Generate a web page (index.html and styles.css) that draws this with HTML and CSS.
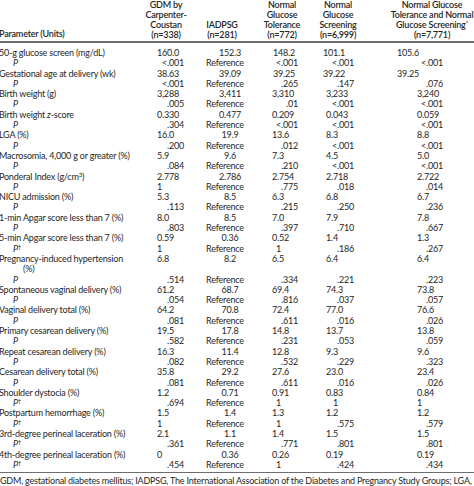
FILE: index.html
```html
<!DOCTYPE html>
<html>
<head>
<meta charset="utf-8">
<link rel="stylesheet" href="styles.css">
</head>
<body>
<div class="sheet">
<table class="tbl">
<colgroup>
<col class="c0"><col class="c1"><col class="c2"><col class="c3"><col class="c4"><col class="c5">
</colgroup>
<thead>
<tr>
<th class="h0">Parameter (Units)</th>
<th>GDM by<br>Carpenter-<br>Coustan<br>(n=338)</th>
<th>IADPSG<br>(n=281)</th>
<th>Normal<br>Glucose<br>Tolerance<br>(n=772)</th>
<th>Normal<br>Glucose<br>Screening<br>(n=6,999)</th>
<th>Normal Glucose<br>Tolerance and Normal<br>Glucose Screening<sup>*</sup><br>(n=7,771)</th>
</tr>
</thead>
<tbody>
<tr class="v first early"><td>50-g glucose screen (mg/dL)</td><td>160.0</td><td>152.3</td><td>148.2</td><td>101.1</td><td>105.6</td></tr>
<tr class="p"><td><i>P</i></td><td>&lt;.001</td><td>Reference</td><td>&lt;.001</td><td>&lt;.001</td><td>&lt;.001</td></tr>
<tr class="v early"><td>Gestational age at delivery (wk)</td><td>38.63</td><td>39.09</td><td>39.25</td><td>39.22</td><td>39.25</td></tr>
<tr class="p"><td><i>P</i></td><td>&lt;.001</td><td>Reference</td><td>.265</td><td>.147</td><td>.076</td></tr>
<tr class="v"><td>Birth weight (g)</td><td>3,288</td><td>3,411</td><td>3,310</td><td>3,233</td><td>3,240</td></tr>
<tr class="p"><td><i>P</i></td><td>.005</td><td>Reference</td><td>.01</td><td>&lt;.001</td><td>&lt;.001</td></tr>
<tr class="v"><td>Birth weight <i>z</i>-score</td><td>0.330</td><td>0.477</td><td>0.209</td><td>0.043</td><td>0.059</td></tr>
<tr class="p"><td><i>P</i></td><td>.304</td><td>Reference</td><td>&lt;.001</td><td>&lt;.001</td><td>&lt;.001</td></tr>
<tr class="v"><td>LGA (%)</td><td>16.0</td><td>19.9</td><td>13.6</td><td>8.3</td><td>8.8</td></tr>
<tr class="p"><td><i>P</i></td><td>.200</td><td>Reference</td><td>.012</td><td>&lt;.001</td><td>&lt;.001</td></tr>
<tr class="v"><td>Macrosomia, 4,000 g or greater (%)</td><td>5.9</td><td>9.6</td><td>7.3</td><td>4.5</td><td>5.0</td></tr>
<tr class="p"><td><i>P</i></td><td>.084</td><td>Reference</td><td>.210</td><td>&lt;.001</td><td>&lt;.001</td></tr>
<tr class="v"><td>Ponderal Index (g/cm<sup>3</sup>)</td><td>2.778</td><td>2.786</td><td>2.754</td><td>2.718</td><td>2.722</td></tr>
<tr class="p"><td><i>P</i></td><td class="one">1</td><td>Reference</td><td>.775</td><td>.018</td><td>.014</td></tr>
<tr class="v"><td>NICU admission (%)</td><td>5.3</td><td>8.5</td><td>6.3</td><td>6.8</td><td>6.7</td></tr>
<tr class="p"><td><i>P</i></td><td>.113</td><td>Reference</td><td>.215</td><td>.250</td><td>.236</td></tr>
<tr class="v"><td>1-min Apgar score less than 7 (%)</td><td>8.0</td><td>8.5</td><td>7.0</td><td>7.9</td><td>7.8</td></tr>
<tr class="p"><td><i>P</i></td><td>.803</td><td>Reference</td><td>.397</td><td>.710</td><td>.667</td></tr>
<tr class="v"><td>5-min Apgar score less than 7 (%)</td><td>0.59</td><td>0.36</td><td>0.52</td><td>1.4</td><td>1.3</td></tr>
<tr class="p"><td><i>P</i><sup>†</sup></td><td class="one">1</td><td>Reference</td><td class="one">1</td><td>.186</td><td>.267</td></tr>
<tr class="v"><td>Pregnancy-induced hypertension</td><td>6.8</td><td>8.2</td><td>6.5</td><td>6.4</td><td>6.4</td></tr>
<tr class="cont"><td>(%)</td><td></td><td></td><td></td><td></td><td></td></tr>
<tr class="p"><td><i>P</i></td><td>.514</td><td>Reference</td><td>.334</td><td>.221</td><td>.223</td></tr>
<tr class="v"><td>Spontaneous vaginal delivery (%)</td><td>61.2</td><td>68.7</td><td>69.4</td><td>74.3</td><td>73.8</td></tr>
<tr class="p"><td><i>P</i></td><td>.054</td><td>Reference</td><td>.816</td><td>.037</td><td>.057</td></tr>
<tr class="v"><td>Vaginal delivery total (%)</td><td>64.2</td><td>70.8</td><td>72.4</td><td>77.0</td><td>76.6</td></tr>
<tr class="p"><td><i>P</i></td><td>.081</td><td>Reference</td><td>.611</td><td>.016</td><td>.026</td></tr>
<tr class="v"><td>Primary cesarean delivery (%)</td><td>19.5</td><td>17.8</td><td>14.8</td><td>13.7</td><td>13.8</td></tr>
<tr class="p"><td><i>P</i></td><td>.582</td><td>Reference</td><td>.231</td><td>.053</td><td>.059</td></tr>
<tr class="v"><td>Repeat cesarean delivery (%)</td><td>16.3</td><td>11.4</td><td>12.8</td><td>9.3</td><td>9.6</td></tr>
<tr class="p"><td><i>P</i></td><td>.082</td><td>Reference</td><td>.532</td><td>.229</td><td>.323</td></tr>
<tr class="v"><td>Cesarean delivery total (%)</td><td>35.8</td><td>29.2</td><td>27.6</td><td>23.0</td><td>23.4</td></tr>
<tr class="p"><td><i>P</i></td><td>.081</td><td>Reference</td><td>.611</td><td>.016</td><td>.026</td></tr>
<tr class="v"><td>Shoulder dystocia (%)</td><td>1.2</td><td>0.71</td><td>0.91</td><td>0.83</td><td>0.84</td></tr>
<tr class="p"><td><i>P</i><sup>†</sup></td><td>.694</td><td>Reference</td><td class="one">1</td><td class="one">1</td><td class="one">1</td></tr>
<tr class="v"><td>Postpartum hemorrhage (%)</td><td>1.5</td><td>1.4</td><td>1.3</td><td>1.2</td><td>1.2</td></tr>
<tr class="p"><td><i>P</i><sup>†</sup></td><td class="one">1</td><td>Reference</td><td class="one">1</td><td>.575</td><td>.579</td></tr>
<tr class="v"><td>3rd-degree perineal laceration (%)</td><td>2.1</td><td>1.1</td><td>1.4</td><td>1.5</td><td>1.5</td></tr>
<tr class="p"><td><i>P</i><sup>†</sup></td><td>.361</td><td>Reference</td><td>.771</td><td>.801</td><td>.801</td></tr>
<tr class="v"><td>4th-degree perineal laceration (%)</td><td>0</td><td>0.36</td><td>0.26</td><td>0.19</td><td>0.19</td></tr>
<tr class="p last"><td><i>P</i><sup>†</sup></td><td>.454</td><td>Reference</td><td class="one">1</td><td>.424</td><td>.434</td></tr>
</tbody>
</table>
<p class="foot">GDM, gestational diabetes mellitus; IADPSG, The International Association of the Diabetes and Pregnancy Study Groups; LGA, large for gestational age; NICU, neonatal intensive care unit.</p>
</div>
</body>
</html>
```

FILE: styles.css
```css
html, body {
  margin: 0;
  padding: 0;
  background: #fff;
}
body {
  width: 474px;
  height: 486px;
  overflow: hidden;
  font-family: Lato, "Open Sans", sans-serif;
  font-size: 9px;
  letter-spacing: -0.2px;
  color: #262626;
}
.sheet {
  width: 510px;
  margin-left: -1px;
}
.tbl {
  border-collapse: collapse;
  table-layout: fixed;
  width: 501px;
}
.c0 { width: 141px; }
.c1 { width: 52px; }
.c2 { width: 60px; }
.c3 { width: 60px; }
.c4 { width: 52px; }
.c5 { width: 136px; }

.tbl th, .tbl td {
  padding: 0;
  line-height: 10.3px;
  white-space: nowrap;
}
.tbl thead th {
  font-weight: 600;
  line-height: 10px;
  text-align: center;
  vertical-align: bottom;
  padding-top: 0;
  padding-bottom: 1px;
  border-bottom: 2px solid #6e6e6e;
}
.tbl thead th.h0 {
  text-align: left;
  padding-bottom: 2px;
}
sup {
  font-size: 6px;
  line-height: 0;
  vertical-align: 3px;
}
.tbl tr.first td { padding-top: 5px; }
.tbl tr.last td {
  padding-bottom: 2px;
  border-bottom: 1px solid #6e6e6e;
}

/* parameter column */
.tbl td:nth-child(1) { text-align: left; }
.tbl tr.p td:nth-child(1) { padding-left: 14px; }
.tbl tr.cont td:nth-child(1) { padding-left: 24px; }

/* GDM column */
.tbl tr.v td:nth-child(2) { padding-left: 17px; }
.tbl tr.p td:nth-child(2) { text-align: right; padding-right: 8px; }
.tbl tr.p td:nth-child(2).one { text-align: left; padding-left: 17px; padding-right: 0; }

/* IADPSG column */
.tbl td:nth-child(3) { text-align: center; }
.tbl tr.v td:nth-child(3) { padding-left: 16px; }
.tbl tr.p td:nth-child(3) { padding-left: 6px; }

/* Normal glucose tolerance */
.tbl tr.v td:nth-child(4) { padding-left: 20px; }
.tbl tr.early td:nth-child(4) { padding-left: 21px; }
.tbl tr.p td:nth-child(4) { text-align: right; padding-right: 14px; }
.tbl tr.p td:nth-child(4).one { text-align: left; padding-left: 24px; padding-right: 0; }

/* Normal glucose screening */
.tbl tr.v td:nth-child(5) { padding-left: 14px; }
.tbl tr.early td:nth-child(5) { padding-left: 11px; }
.tbl tr.p td:nth-child(5) { text-align: right; padding-right: 10px; }
.tbl tr.p td:nth-child(5).one { text-align: left; padding-left: 21px; padding-right: 0; }

/* Combined normal */
.tbl tr.v td:nth-child(6) { padding-left: 53px; }
.tbl tr.early td:nth-child(6) { padding-left: 33px; }
.tbl tr.p td:nth-child(6) { text-align: right; padding-right: 57px; }
.tbl tr.p td:nth-child(6).one { text-align: left; padding-left: 53px; padding-right: 0; }

.foot {
  margin: 0;
  padding: 3px 0 0 1px;
  line-height: 10px;
  white-space: nowrap;
}
```
